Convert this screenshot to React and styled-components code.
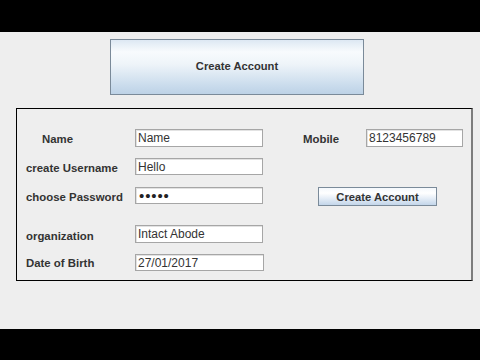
import React from "react";
import styled, { createGlobalStyle } from "styled-components";

const Global = createGlobalStyle`
  html, body { margin: 0; padding: 0; background: #000; }
  body { font-family: "Liberation Sans", Arial, sans-serif; }
`;

const Screen = styled.div`
  width: 480px;
  height: 360px;
  background: #000;
  display: flex;
  flex-direction: column;
  overflow: hidden;
`;

const Letterbox = styled.div`
  height: ${(p) => p.$h}px;
  background: #000;
  flex: none;
`;

const Window = styled.div`
  height: 297px;
  background: #eeeeee;
  display: flex;
  flex-direction: column;
  flex: none;
`;

const BigButton = styled.button`
  margin: 7px 0 0 110px;
  width: 254px;
  height: 56px;
  border: 1px solid #7a8a99;
  background: linear-gradient(#dde8f3 0%, #f8fbfd 22%, #eef4f9 45%, #c9dbec 85%, #bdd2e6 100%);
  font: bold 11.2px "Liberation Sans", Arial, sans-serif;
  color: #333;
  padding: 0 0 2px 0;
`;

const Panel = styled.div`
  margin: 13px 0 0 16px;
  width: 457px;
  height: 173px;
  box-sizing: border-box;
  border: 1px solid #000;
  border-right: 2px solid #7d7d7d;
  padding: 20px 0 0 9px;
  display: grid;
  grid-template-columns: 109px 128px 40px 63px 97px;
  grid-template-rows: 18px 18px 18px 27px 18px;
  row-gap: 11px;
  align-items: end;
`;

const Label = styled.div`
  grid-column: ${(p) => p.$col || 1};
  grid-row: ${(p) => p.$row};
  align-self: end;
  height: 18px;
  box-sizing: border-box;
  font: bold 11.4px/18px "Liberation Sans", Arial, sans-serif;
  color: #333;
  padding-left: ${(p) => p.$indent || 0}px;
  padding-top: ${(p) => p.$shift ?? 1}px;
  white-space: nowrap;
`;

const Field = styled.div`
  grid-column: ${(p) => p.$col || 2};
  grid-row: ${(p) => p.$row};
  align-self: ${(p) => (p.$top ? "start" : "end")};
  box-sizing: border-box;
  height: ${(p) => p.$h || 18}px;
  width: ${(p) => p.$w || 128}px;
  border: 1px solid #a6a6a6;
  box-shadow: inset 1px 1px 0 #e2e2e2;
  background: #fff;
  display: flex;
  align-items: center;
  padding-left: 2px;
  font: 12px "Liberation Sans", Arial, sans-serif;
  color: #333;
  white-space: nowrap;
  overflow: hidden;
`;

const Dots = styled.span`
  font-size: 15px;
  letter-spacing: 0.9px;
  color: #222;
  line-height: 1;
  margin-left: 1px;
`;

const SmallButton = styled.button`
  grid-column: 4 / 6;
  grid-row: 3;
  align-self: start;
  justify-self: start;
  margin-left: 15px;
  width: 119px;
  height: 19px;
  box-sizing: border-box;
  border: 1px solid #7a8a99;
  background: linear-gradient(#f4f8fc 0%, #ffffff 30%, #e6eef7 60%, #c3d6ea 100%);
  font: bold 11.2px "Liberation Sans", Arial, sans-serif;
  color: #333;
  padding: 0;
`;

export default function App() {
  return (
    <Screen>
      <Global />
      <Letterbox $h={32} />
      <Window>
        <BigButton>Create Account</BigButton>
        <Panel>
          <Label $row={1} $indent={16}>Name</Label>
          <Field $row={1}>Name</Field>
          <Label $row={1} $col={4}>Mobile</Label>
          <Field $row={1} $col={5} $w={97}>8123456789</Field>

          <Label $row={2}>create Username</Label>
          <Field $row={2} $top $h={17}>Hello</Field>

          <Label $row={3}>choose Password</Label>
          <Field $row={3} $top $h={17}><Dots>•••••</Dots></Field>
          <SmallButton>Create Account</SmallButton>

          <Label $row={4} $shift={2}>organization</Label>
          <Field $row={4}>Intact Abode</Field>

          <Label $row={5} $shift={0}>Date of Birth</Label>
          <Field $row={5} $top $h={17} $w={129}>27/01/2017</Field>
        </Panel>
      </Window>
      <Letterbox $h={31} />
    </Screen>
  );
}
